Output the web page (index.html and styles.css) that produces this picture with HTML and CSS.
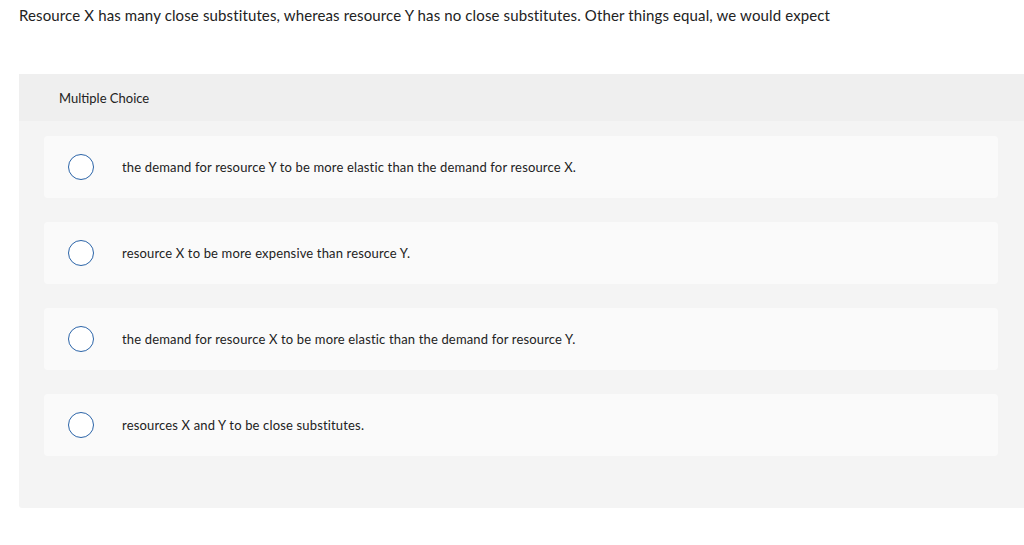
FILE: index.html
```html
<!DOCTYPE html>
<html>
<head>
<meta charset="utf-8">
<link rel="stylesheet" href="styles.css">
</head>
<body>
<p class="question">Resource X has many close substitutes, whereas resource Y has no close substitutes. Other things equal, we would expect</p>
<div class="panel">
  <div class="panel-head">Multiple Choice</div>
  <div class="options">
    <div class="option"><span class="radio"></span><span class="label">the demand for resource Y to be more elastic than the demand for resource X.</span></div>
    <div class="option"><span class="radio"></span><span class="label">resource X to be more expensive than resource Y.</span></div>
    <div class="option"><span class="radio"></span><span class="label">the demand for resource X to be more elastic than the demand for resource Y.</span></div>
    <div class="option"><span class="radio"></span><span class="label">resources X and Y to be close substitutes.</span></div>
  </div>
</div>
</body>
</html>
```
FILE: styles.css
```css
html, body { margin: 0; padding: 0; background: #fff; }
body {
  font-family: "Lato", "Liberation Sans", sans-serif;
  color: #222;
  padding-left: 19px;
  overflow: hidden;
}
.question {
  margin: 0;
  padding-top: 5px;
  font-size: 15px;
  letter-spacing: 0.13px;
  line-height: 20px;
  height: 69px;
}
.panel {
  background: #f4f4f4;
  border-radius: 3px 0 0 3px;
  height: 434px;
}
.panel-head {
  background: #efefef;
  height: 47px;
  display: flex;
  align-items: center;
  padding-left: 40px;
  font-size: 13px;
}
.options {
  padding: 15px 26px 0 25px;
  display: flex;
  flex-direction: column;
  gap: 24px;
}
.option {
  background: #fafafa;
  border-radius: 4px;
  height: 62px;
  display: flex;
  align-items: center;
  font-size: 13px;
  letter-spacing: 0.16px;
}
.radio {
  width: 24px;
  height: 24px;
  border: 1px solid #2b64a8;
  border-radius: 50%;
  background: #fff;
  margin-left: 24px;
  margin-right: 28px;
  flex: none;
}
```
